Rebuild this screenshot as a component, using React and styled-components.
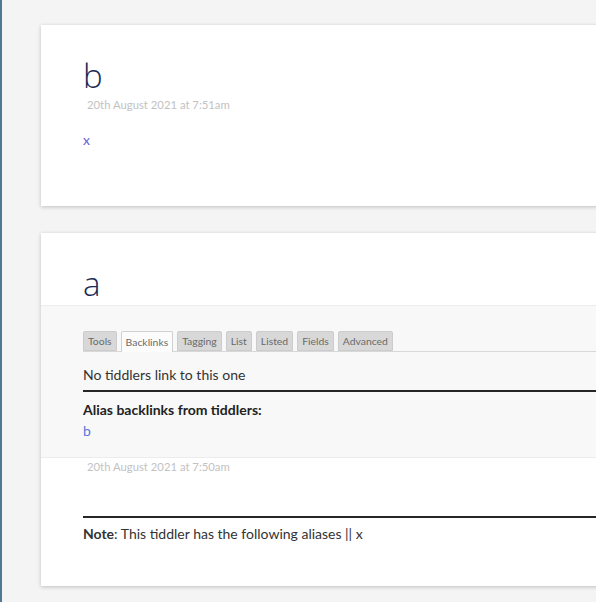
import React from "react";
import styled, { createGlobalStyle } from "styled-components";

const Global = createGlobalStyle`
  html, body {
    margin: 0;
    height: 100%;
    overflow: hidden;
  }
  body {
    background: #f4f4f4;
    font-family: Lato, "Open Sans", "Liberation Sans", sans-serif;
    font-size: 14px;
    line-height: 20px;
    color: #333333;
  }
`;

const Page = styled.div`
  min-height: 602px;
  border-left: 2px solid #4f7892;
  padding: 25px 0 0 39px;
  box-sizing: border-box;
`;

const Tiddler = styled.div`
  width: 800px;
  box-sizing: border-box;
  background: #ffffff;
  box-shadow: 0 1px 4px rgba(0, 0, 0, 0.22);
  padding: 28px 42px 42px 42px;
  margin-bottom: 27px;
`;

const Title = styled.h2`
  margin: 2px 0 0 0;
  font-family: "Open Sans", Lato, sans-serif;
  font-size: 33px;
  line-height: 42px;
  font-weight: 300;
  color: #182955;
`;

const Subtitle = styled.div`
  margin: ${(p) => (p.$flush ? "0" : "-1px")} 0 0 4px;
  font-size: 11.3px;
  line-height: 18px;
  color: #c2c2c2;
`;

const Body = styled.div`
  margin-top: 16px;
`;

const Para = styled.p`
  margin: 0 0 14px 0;
`;

const Link = styled.a`
  color: ${(p) => p.$color || "#5778d8"};
  text-decoration: none;
  cursor: pointer;
`;

const InfoPanel = styled.div`
  margin: 0 -42px;
  padding: 25px 42px 16px 42px;
  background: #f8f8f8;
  border-top: 1px solid #ececec;
  border-bottom: 1px solid #ececec;
`;

const TabRow = styled.div`
  display: flex;
  gap: 4px;
  border-bottom: 1px solid #d8d8d8;
  height: 20px;
  align-items: flex-end;
`;

const Tab = styled.button`
  height: ${(p) => (p.$active ? "21px" : "20px")};
  margin: 0 0 ${(p) => (p.$active ? "-1px" : "0")} 0;
  padding: 0 4px;
  box-sizing: border-box;
  font-family: inherit;
  font-size: 10.4px;
  line-height: 18px;
  color: #6a6a6a;
  background: ${(p) => (p.$active ? "#fcfcfc" : "#d8d8d8")};
  border: 1px solid ${(p) => (p.$active ? "#d0d0d0" : "#cccccc")};
  border-bottom: ${(p) => (p.$active ? "none" : "1px solid #cccccc")};
  border-radius: 2px 2px 0 0;
  cursor: pointer;
`;

const TabBody = styled.div`
  padding-top: 13px;
`;

const Rule = styled.hr`
  border: none;
  height: 2px;
  background: #262626;
  margin: ${(p) => p.$top}px 0 ${(p) => p.$bottom}px 0;
`;

const Heading = styled.div`
  font-weight: bold;
  color: #222222;
`;

const BacklinkList = styled.div`
  margin-top: 1px;
`;

const Spacer = styled.div`
  height: 26px;
`;

const NoteLine = styled.div``;

const tabs = ["Tools", "Backlinks", "Tagging", "List", "Listed", "Fields", "Advanced"];

export default function App() {
  return (
    <>
      <Global />
      <Page>
        <Tiddler>
          <Title>b</Title>
          <Subtitle>20th August 2021 at 7:51am</Subtitle>
          <Body>
            <Para>
              <Link $color="#6b5fd3">x</Link>
            </Para>
          </Body>
        </Tiddler>

        <Tiddler>
          <Title>a</Title>
          <InfoPanel>
            <TabRow>
              {tabs.map((t) => (
                <Tab key={t} $active={t === "Backlinks"}>
                  {t}
                </Tab>
              ))}
            </TabRow>
            <TabBody>
              <div>No tiddlers link to this one</div>
              <Rule $top={5} $bottom={8} />
              <Heading>Alias backlinks from tiddlers:</Heading>
              <BacklinkList>
                <Link>b</Link>
              </BacklinkList>
            </TabBody>
          </InfoPanel>
          <Subtitle $flush>20th August 2021 at 7:50am</Subtitle>
          <Spacer />
          <Rule $top={14} $bottom={6} />
          <NoteLine>
            <b>Note</b>: This tiddler has the following aliases || x
          </NoteLine>
        </Tiddler>
      </Page>
    </>
  );
}
